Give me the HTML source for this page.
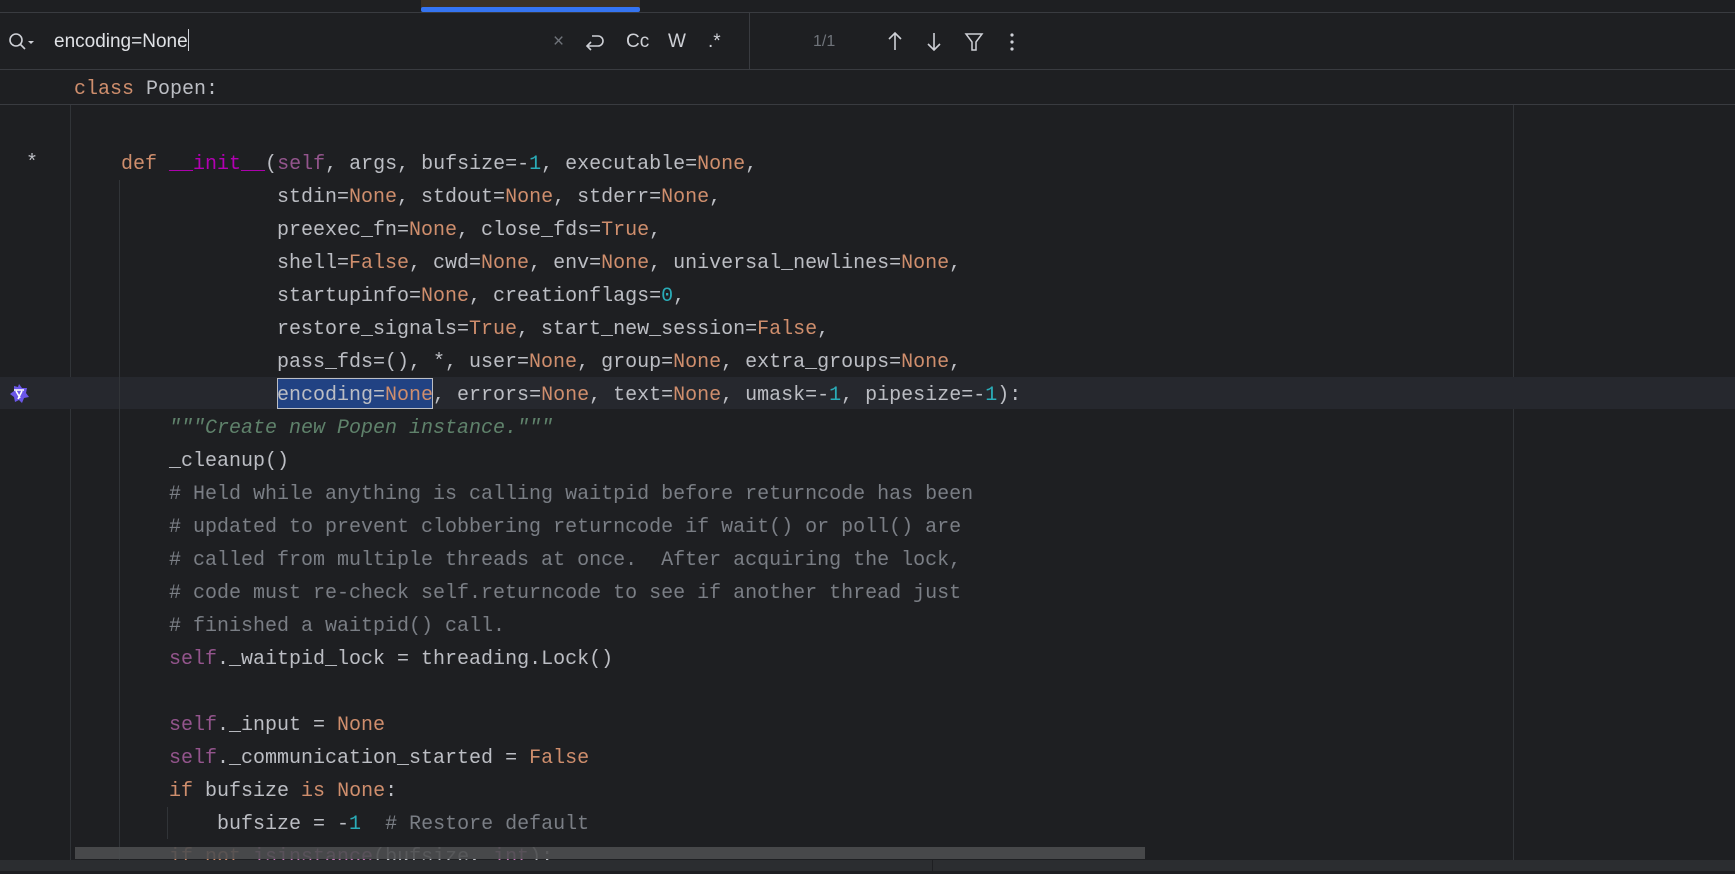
<!DOCTYPE html>
<html><head><meta charset="utf-8"><style>
*{margin:0;padding:0;box-sizing:border-box}
body{width:1735px;height:871px;background:#1e1f22;overflow:hidden;position:relative;font-family:"Liberation Mono",monospace;color:#bcbec4}
.abs{position:absolute}
.l{position:absolute;left:0;height:33px;line-height:33px;font-size:20px;white-space:pre}
.k{color:#cf8e6d}.s{color:#94558d}.m{color:#c77dbb}.f{color:#b200b2}.n{color:#2aacb8}.c{color:#7a7e85}.d{color:#5f826b;font-style:italic}
.ic{position:absolute;top:27px;color:#ced0d6;font-family:"Liberation Sans",sans-serif;font-size:19px;line-height:30px}
</style></head><body>
<div class="abs" style="left:0;top:0;width:1735px;height:12px;background:#1e1f22"></div>
<div class="abs" style="left:421px;top:0;width:219px;height:8px;background:#3b3125"></div>
<div class="abs" style="left:421px;top:7px;width:219px;height:5px;background:#3574f0;border-radius:2px"></div>
<div class="abs" style="left:0;top:12px;width:1735px;height:1px;background:#393b40"></div>
<div class="abs" style="left:0;top:13px;width:1735px;height:56px;background:#1e1f22"></div>
<svg class="abs" style="left:8px;top:32px" width="28" height="20" viewBox="0 0 28 20"><circle cx="8" cy="8" r="6" fill="none" stroke="#ced0d6" stroke-width="1.6"/><path d="M12.5 12.5L17 17" stroke="#ced0d6" stroke-width="1.6"/><path d="M20 9h6l-3 3z" fill="#ced0d6"/></svg>
<div class="abs" style="left:54px;top:27px;font-family:'Liberation Sans',sans-serif;font-size:19px;line-height:30px;color:#dfe1e5">encoding=None<span style="display:inline-block;width:1px;height:22px;background:#ced0d6;vertical-align:-4px"></span></div>
<div class="ic" style="left:553px;color:#6f737a">×</div>
<svg class="abs" style="left:583px;top:31px" width="24" height="22" viewBox="0 0 24 22"><path d="M4 15h11a5 5 0 0 0 0-10H9" fill="none" stroke="#ced0d6" stroke-width="1.6"/><path d="M8 11l-4 4 4 4" fill="none" stroke="#ced0d6" stroke-width="1.6"/></svg>
<div class="ic" style="left:626px">Cc</div>
<div class="ic" style="left:668px">W</div>
<div class="ic" style="left:708px">.*</div>
<div class="abs" style="left:749px;top:13px;width:1px;height:56px;background:#393b40"></div>
<div class="ic" style="left:813px;font-size:16px;color:#6f737a">1/1</div>
<svg class="abs" style="left:884px;top:30px" width="140" height="24" viewBox="0 0 140 24"><path d="M11 20V3M5 9l6-6 6 6" fill="none" stroke="#ced0d6" stroke-width="1.6"/><path d="M50 3v17M44 14l6 6 6-6" fill="none" stroke="#ced0d6" stroke-width="1.6"/><path d="M82 4h16l-6 8v8h-4v-8z" fill="none" stroke="#ced0d6" stroke-width="1.5"/><circle cx="128" cy="5" r="1.6" fill="#ced0d6"/><circle cx="128" cy="12" r="1.6" fill="#ced0d6"/><circle cx="128" cy="19" r="1.6" fill="#ced0d6"/></svg>
<div class="abs" style="left:0;top:69px;width:1735px;height:1px;background:#393b40"></div>
<div class="l" style="top:73px;left:74px"><span class="k">class</span> Popen:</div>
<div class="abs" style="left:0;top:104px;width:1735px;height:1px;background:#393b40"></div>
<div class="abs" style="left:70px;top:105px;width:1px;height:755px;background:#313438"></div>
<div class="abs" style="left:1513px;top:105px;width:1px;height:755px;background:#313438"></div>
<div class="abs" style="left:0;top:377px;width:1735px;height:32px;background:#26282e"></div>
<div class="abs" style="left:119px;top:180px;width:1px;height:680px;background:#313438"></div>
<div class="abs" style="left:167px;top:807px;width:1px;height:32px;background:#313438"></div>
<div class="abs" style="left:26px;top:152px;font-size:20px;color:#bcbec4">*</div>
<svg class="abs" style="left:8px;top:382px" width="22" height="22" viewBox="0 0 22 22"><path d="M11 2l3 4 5 0-1 5 3 4-5 1-2 5-3-3-4 2-1-5-4-3 4-3 0-5 4 1z" fill="#6b57e8"/><path d="M6 8h10M8 9l4 7M14 9l-4 8" stroke="#fff" stroke-width="1.6" fill="none"/></svg>
<div class="abs" style="left:277px;top:378px;width:156px;height:31px;background:#214283;border:1px solid #bcbec4"></div>
<div style="position:absolute;left:0;top:2px">
<div class="l" style="top:146px;left:121px"><span class="k">def</span> <span class="f">__init__</span>(<span class="s">self</span>, args, bufsize=-<span class="n">1</span>, executable=<span class="k">None</span>,</div>
<div class="l" style="top:179px;left:277px">stdin=<span class="k">None</span>, stdout=<span class="k">None</span>, stderr=<span class="k">None</span>,</div>
<div class="l" style="top:212px;left:277px">preexec_fn=<span class="k">None</span>, close_fds=<span class="k">True</span>,</div>
<div class="l" style="top:245px;left:277px">shell=<span class="k">False</span>, cwd=<span class="k">None</span>, env=<span class="k">None</span>, universal_newlines=<span class="k">None</span>,</div>
<div class="l" style="top:278px;left:277px">startupinfo=<span class="k">None</span>, creationflags=<span class="n">0</span>,</div>
<div class="l" style="top:311px;left:277px">restore_signals=<span class="k">True</span>, start_new_session=<span class="k">False</span>,</div>
<div class="l" style="top:344px;left:277px">pass_fds=(), *, user=<span class="k">None</span>, group=<span class="k">None</span>, extra_groups=<span class="k">None</span>,</div>
<div class="l" style="top:377px;left:277px">encoding=<span class="k">None</span>, errors=<span class="k">None</span>, text=<span class="k">None</span>, umask=-<span class="n">1</span>, pipesize=-<span class="n">1</span>):</div>
<div class="l d" style="top:410px;left:169px">"""Create new Popen instance."""</div>
<div class="l" style="top:443px;left:169px">_cleanup()</div>
<div class="l c" style="top:476px;left:169px"># Held while anything is calling waitpid before returncode has been</div>
<div class="l c" style="top:509px;left:169px"># updated to prevent clobbering returncode if wait() or poll() are</div>
<div class="l c" style="top:542px;left:169px"># called from multiple threads at once.  After acquiring the lock,</div>
<div class="l c" style="top:575px;left:169px"># code must re-check self.returncode to see if another thread just</div>
<div class="l c" style="top:608px;left:169px"># finished a waitpid() call.</div>
<div class="l" style="top:641px;left:169px"><span class="s">self</span>._waitpid_lock = threading.Lock()</div>
<div class="l" style="top:707px;left:169px"><span class="s">self</span>._input = <span class="k">None</span></div>
<div class="l" style="top:740px;left:169px"><span class="s">self</span>._communication_started = <span class="k">False</span></div>
<div class="l" style="top:773px;left:169px"><span class="k">if</span> bufsize <span class="k">is</span> <span class="k">None</span>:</div>
<div class="l" style="top:806px;left:217px">bufsize = -<span class="n">1</span>  <span class="c"># Restore default</span></div>
<div class="l" style="top:839px;left:169px"><span class="k">if not</span> <span class="m">isinstance</span>(bufsize, <span class="m">int</span>):</div>
</div>
<div class="abs" style="left:75px;top:847px;width:1070px;height:12px;background:#4b4c4f;opacity:.9"></div>
<div class="abs" style="left:0;top:860px;width:1735px;height:11px;background:#2b2d30"></div>
<div class="abs" style="left:932px;top:860px;width:1px;height:11px;background:#1e1f22"></div>
</body></html>
